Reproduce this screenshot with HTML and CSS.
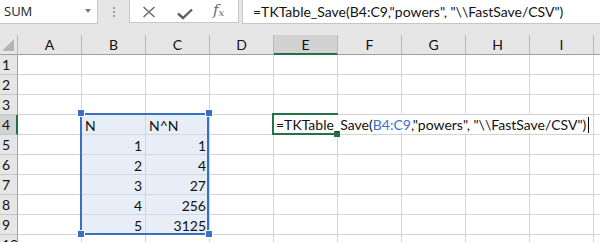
FILE: index.html
```html
<!DOCTYPE html>
<html>
<head>
<meta charset="utf-8">
<link rel="stylesheet" href="styles.css">
</head>
<body>
<div class="app">
  <div class="toolbar">
    <div class="namebox"><span class="name">SUM</span><span class="caret-down"></span></div>
    <div class="grip"><i></i><i></i><i></i></div>
    <div class="fxbtns">
      <svg class="ico" width="14" height="12" viewBox="0 0 14 12"><path d="M1.5 1 L12.5 11 M12.5 1 L1.5 11" stroke="#707070" stroke-width="1.6" fill="none"/></svg>
      <svg class="ico" width="16" height="12" viewBox="0 0 16 12"><path d="M1 5.5 L6 10 L15 1.5" stroke="#606060" stroke-width="2.4" fill="none"/></svg>
      <span class="fx">f<sub>x</sub></span>
    </div>
    <div class="formula">=TKTable_Save(B4:C9,"powers", "\\FastSave/CSV")</div>
  </div>
  <div class="sheet">
    <div class="grid">
      <div class="corner"><span class="tri"></span></div>
      <div class="ch">A</div><div class="ch">B</div><div class="ch">C</div><div class="ch">D</div>
      <div class="ch ch-active">E</div><div class="ch">F</div><div class="ch">G</div><div class="ch">H</div><div class="ch">I</div><div class="ch ch-last"></div>

      <div class="rh">1</div><div class="c"></div><div class="c"></div><div class="c"></div><div class="c"></div><div class="c"></div><div class="c"></div><div class="c"></div><div class="c"></div><div class="c"></div><div class="c"></div>
      <div class="rh">2</div><div class="c"></div><div class="c"></div><div class="c"></div><div class="c"></div><div class="c"></div><div class="c"></div><div class="c"></div><div class="c"></div><div class="c"></div><div class="c"></div>
      <div class="rh">3</div><div class="c"></div><div class="c"></div><div class="c"></div><div class="c"></div><div class="c"></div><div class="c"></div><div class="c"></div><div class="c"></div><div class="c"></div><div class="c"></div>
      <div class="rh rh-active">4</div><div class="c"></div><div class="c sel">N</div><div class="c sel">N^N</div><div class="c"></div><div class="c"></div><div class="c"></div><div class="c"></div><div class="c"></div><div class="c"></div><div class="c"></div>
      <div class="rh">5</div><div class="c"></div><div class="c sel num">1</div><div class="c sel num">1</div><div class="c"></div><div class="c"></div><div class="c"></div><div class="c"></div><div class="c"></div><div class="c"></div><div class="c"></div>
      <div class="rh">6</div><div class="c"></div><div class="c sel num">2</div><div class="c sel num">4</div><div class="c"></div><div class="c"></div><div class="c"></div><div class="c"></div><div class="c"></div><div class="c"></div><div class="c"></div>
      <div class="rh">7</div><div class="c"></div><div class="c sel num">3</div><div class="c sel num">27</div><div class="c"></div><div class="c"></div><div class="c"></div><div class="c"></div><div class="c"></div><div class="c"></div><div class="c"></div>
      <div class="rh">8</div><div class="c"></div><div class="c sel num">4</div><div class="c sel num">256</div><div class="c"></div><div class="c"></div><div class="c"></div><div class="c"></div><div class="c"></div><div class="c"></div><div class="c"></div>
      <div class="rh">9</div><div class="c"></div><div class="c sel num">5</div><div class="c sel num">3125</div><div class="c"></div><div class="c"></div><div class="c"></div><div class="c"></div><div class="c"></div><div class="c"></div><div class="c"></div>
      <div class="rh">10</div><div class="c"></div><div class="c"></div><div class="c"></div><div class="c"></div><div class="c"></div><div class="c"></div><div class="c"></div><div class="c"></div><div class="c"></div><div class="c"></div>
    </div>
    <div class="selection"></div>
    <span class="h h-tl"></span><span class="h h-tr"></span><span class="h h-bl"></span><span class="h h-br"></span>
    <div class="active"></div>
    <div class="editor">=TKTable_Save(<span class="ref">B4:C9</span>,"powers", "\\FastSave/CSV")<span class="cursor"></span></div>
    <span class="fill"></span>
  </div>
</div>
</body>
</html>
```

FILE: styles.css
```css
html, body {
  margin: 0;
  padding: 0;
}
body {
  background: #e6e6e6;
  width: 600px;
  height: 242px;
  overflow: hidden;
  font-family: Lato, "Liberation Sans", sans-serif;
}
.app {
  width: 600px;
}
.toolbar {
  display: flex;
  height: 24px;
}
.namebox {
  width: 87px;
  height: 23px;
  background: #fff;
  border-right: 1px solid #c6c6c6;
  border-bottom: 1px solid #c6c6c6;
  display: flex;
  align-items: center;
  justify-content: space-between;
  padding-left: 4px;
  padding-right: 6px;
  box-sizing: content-box;
}
.name {
  font-family: "Open Sans", "Noto Sans", sans-serif;
  font-size: 13px;
  color: #222;
  line-height: 23px;
}
.caret-down {
  width: 0;
  height: 0;
  border-left: 3.5px solid transparent;
  border-right: 3.5px solid transparent;
  border-top: 4px solid #7a7a7a;
  margin-top: -2px;
}
.grip {
  width: 31px;
  display: flex;
  flex-direction: column;
  align-items: center;
  padding-top: 7px;
  gap: 2px;
}
.grip i {
  display: block;
  width: 2px;
  height: 2px;
  background: #a0a0a0;
}
.fxbtns {
  height: 23px;
  background: #fff;
  border: 1px solid #c6c6c6;
  border-top: none;
  display: flex;
  align-items: center;
  padding-left: 12px;
  box-sizing: border-box;
  width: 110px;
}
.fxbtns .ico:nth-child(1) {
  margin-top: 1px;
}
.fxbtns .ico:nth-child(2) {
  margin-left: 21px;
  margin-top: 5px;
}
.fx {
  margin-left: 20px;
  font-family: "DejaVu Serif", "Liberation Serif", serif;
  font-style: italic;
  font-size: 15px;
  color: #6a6a6a;
  margin-top: -2px;
}
.fx sub {
  font-size: 10px;
  vertical-align: -1px;
}
.formula {
  margin-left: 3px;
  flex: 1;
  height: 23px;
  background: #fff;
  border-left: 1px solid #c6c6c6;
  border-bottom: 1px solid #c6c6c6;
  font-size: 14px;
  line-height: 23px;
  padding-left: 10px;
  color: #111;
  white-space: nowrap;
}
.sheet {
  position: relative;
  margin-top: 11px;
}
.grid {
  display: grid;
  grid-template-columns: 18px repeat(9, 64px) 1fr;
  grid-auto-rows: 20px;
}
.grid > div {
  box-sizing: border-box;
  font-size: 14px;
  color: #111;
}
.corner, .ch {
  background: #e6e6e6;
  border-right: 1px solid #b8b8b8;
  border-bottom: 1px solid #9e9e9e;
}
.corner {
  position: relative;
}
.tri {
  position: absolute;
  right: 3px;
  bottom: 3px;
  width: 0;
  height: 0;
  border-left: 12px solid transparent;
  border-bottom: 12px solid #b4b4b4;
}
.ch {
  display: flex;
  align-items: center;
  justify-content: center;
  line-height: 19px;
  color: #222;
}
.ch-last {
  border-right: none;
}
.ch-active {
  background: #d2d2d2;
  color: #217346;
  border-bottom: 2px solid #217346;
}
.rh {
  background: #e6e6e6;
  border-right: 1px solid #9e9e9e;
  border-bottom: 1px solid #c8c8c8;
  padding-left: 2px;
  line-height: 20px;
  color: #222;
}
.rh-active {
  background: #d2d2d2;
  border-right: 2px solid #217346;
  color: #217346;
}
.c {
  background: #fff;
  border-right: 1px solid #d4d4d4;
  border-bottom: 1px solid #d4d4d4;
  line-height: 19px;
  padding: 1px 3px 0 3px;
  white-space: nowrap;
}
.c.sel {
  background: #e8eef8;
  border-color: #d1d7e0;
}
.c.num {
  text-align: right;
}
.selection {
  position: absolute;
  left: 80px;
  top: 78px;
  width: 129px;
  height: 122px;
  box-sizing: border-box;
  border: 2px solid #3a6fc8;
}
.h {
  position: absolute;
  width: 6px;
  height: 6px;
  background: #3a6fc8;
  outline: 1px solid #fff;
}
.h-tl { left: 78px; top: 75px; }
.h-tr { left: 206px; top: 75px; }
.h-bl { left: 78px; top: 196px; }
.h-br { left: 206px; top: 196px; }
.active {
  position: absolute;
  left: 272px;
  top: 78px;
  width: 66px;
  height: 22px;
  box-sizing: border-box;
  border: 2px solid #217346;
}
.editor {
  position: absolute;
  left: 274px;
  top: 80px;
  width: 318px;
  height: 18px;
  background: #fff;
  font-size: 14px;
  line-height: 19px;
  padding-left: 2px;
  box-sizing: border-box;
  white-space: nowrap;
  color: #111;
}
.ref {
  color: #3a72c4;
}
.cursor {
  display: inline-block;
  width: 1px;
  height: 16px;
  background: #000;
  vertical-align: -3px;
  margin-left: 2px;
}
.fill {
  position: absolute;
  left: 334px;
  top: 97px;
  width: 6px;
  height: 5px;
  background: #217346;
}
```
